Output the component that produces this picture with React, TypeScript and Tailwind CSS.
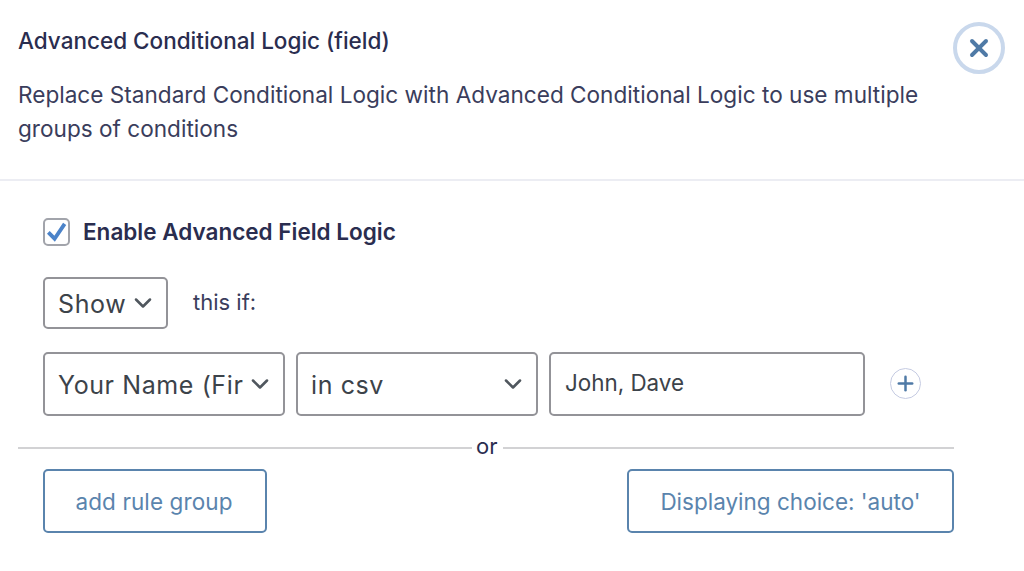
import { ChevronDown, Plus, X } from 'lucide-react';

function SelectBox({ label, className }: { label: string; className: string }) {
    return (
        <div className={`flex items-center justify-between rounded-[5px] border-2 border-[#939398] bg-white pl-[13px] pr-[9px] text-[25px] tracking-[0.6px] text-[#3c434a] ${className}`}>
            <span className="overflow-hidden whitespace-nowrap pt-[4px]">{label}</span>
            <ChevronDown className="h-[28px] w-[28px] shrink-0 text-[#50575e]" strokeWidth={2.2} />
        </div>
    );
}

export default function App() {
    return (
        <div className="h-[571px] w-[1024px] overflow-hidden bg-white font-['Inter',sans-serif] text-[#2a2d4f]">
            <div className="relative h-[181px] border-b-2 border-[#ecedf3] pl-[18px] pt-[26px]">
                <h1 className="text-[22.5px] font-medium leading-[30px]">Advanced Conditional Logic (field)</h1>
                <p className="mt-[22px] w-[930px] text-[22.6px] leading-[34px] text-[#3a3d5c]">
                    Replace Standard Conditional Logic with Advanced Conditional Logic to use multiple groups of conditions
                </p>
                <button className="absolute left-[953px] top-[22px] flex h-[52px] w-[52px] items-center justify-center rounded-full border-[4px] border-[#c9d8ec] bg-white text-[#4f7aa6]">
                    <X className="h-[28px] w-[28px]" strokeWidth={3.4} />
                </button>
            </div>
            <div className="pl-[18px] pt-[37px]">
                <div className="ml-[25px] flex items-center gap-[13px]">
                    <div className="flex h-[28px] w-[27px] items-center justify-center rounded-[5px] border-2 border-[#a2a4ab] bg-white">
                        <svg viewBox="0 0 24 24" className="h-[24px] w-[24px] text-[#4b83c9]" fill="none" stroke="currentColor" strokeWidth={4}>
                            <path d="M3.5 12.5 L10 19 L20.5 3.5" />
                        </svg>
                    </div>
                    <span className="text-[22.5px] font-semibold leading-[28px]">Enable Advanced Field Logic</span>
                </div>
                <div className="ml-[25px] mt-[31px] flex items-center gap-[25px]">
                    <SelectBox label="Show" className="h-[52px] w-[125px]" />
                    <span className="-mt-[2px] text-[22px] text-[#3a3d5c]">this if:</span>
                </div>
                <div className="ml-[25px] mt-[23px] flex items-center gap-[11px]">
                    <SelectBox label="Your Name (Fir" className="h-[64px] w-[242px]" />
                    <SelectBox label="in csv" className="h-[64px] w-[242px]" />
                    <div className="flex h-[64px] w-[316px] items-center rounded-[5px] border-2 border-[#939398] bg-white pb-[2px] pl-[14px] text-[22.4px] text-[#3c434a]">John, Dave</div>
                    <div className="-mt-[2px] ml-[14px] flex h-[31px] w-[31px] items-center justify-center rounded-full border-[1.5px] border-[#c5cbe2] text-[#4f7aa6]">
                        <Plus className="h-[23px] w-[23px]" strokeWidth={2.6} />
                    </div>
                </div>
                <div className="mt-[18px] flex w-[936px] items-center">
                    <div className="h-[2px] w-[454px] bg-[#d2d2d4]" />
                    <span className="-mt-[2px] -translate-y-[1px] pl-[4px] pr-[6px] text-[22px] leading-[30px]">or</span>
                    <div className="h-[2px] flex-1 bg-[#d2d2d4]" />
                </div>
                <div className="ml-[25px] mt-[7px] flex w-[911px] justify-between">
                    <button className="h-[64px] w-[224px] rounded-[5px] border-2 border-[#5a84ad] pr-[2px] pt-[2px] text-[22.5px] tracking-[0.1px] text-[#5a84ad]">add rule group</button>
                    <button className="h-[64px] w-[327px] rounded-[5px] border-2 border-[#5a84ad] pt-[2px] text-[22.5px] text-[#5a84ad]">Displaying choice: 'auto'</button>
                </div>
            </div>
        </div>
    );
}
